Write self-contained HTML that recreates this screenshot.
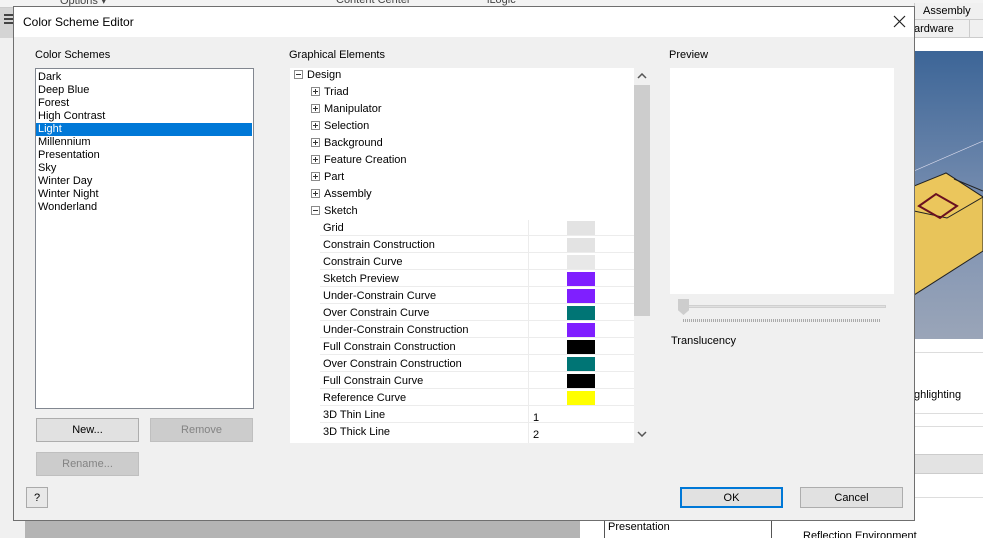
<!DOCTYPE html>
<html><head><meta charset="utf-8"><style>
*{margin:0;padding:0;box-sizing:border-box}
html,body{width:983px;height:538px;overflow:hidden}
body{position:relative;background:#f0f0f0;font-family:"Liberation Sans",sans-serif;font-size:11px;color:#000}
.a{position:absolute}
.btn{position:absolute;background:#e1e1e1;border:1px solid #adadad;display:flex;align-items:center;justify-content:center}
.dis{background:#cccccc;border-color:#bfbfbf;color:#838383}
.row{position:absolute;left:0;width:344px;height:17px;line-height:19px;white-space:nowrap}
.pm{display:inline-block;width:9px;height:9px;border:1px solid #8a8a8a;position:relative;vertical-align:-1px;margin-right:4px;background:#fff}
.pm:before{content:"";position:absolute;left:1px;top:3px;width:5px;height:1px;background:#333}
.pm.p:after{content:"";position:absolute;left:3px;top:1px;width:1px;height:5px;background:#333}
.sw{position:absolute;left:277px;top:2px;width:28px;height:14px}
.sep{position:absolute;left:30px;right:0;bottom:0;height:1px;background:#ececec}
</style></head><body>
<div class="a" style="left:0;top:0;width:983px;height:8px;background:#f3f3f3;border-bottom:1px solid #ccc"></div>
<div class="a" style="left:60px;top:-6px;color:#444">Options ▾</div>
<div class="a" style="left:336px;top:-6px;color:#444">Content Center</div>
<div class="a" style="left:487px;top:-6px;color:#444">iLogic</div>
<div class="a" style="left:0;top:8px;width:13px;height:30px;background:#d4d4d4"></div>
<div class="a" style="left:4px;top:14px;width:9px;height:2px;background:#444;box-shadow:0 4px 0 #444,0 8px 0 #444"></div>
<div class="a" style="left:0;top:38px;width:13px;height:500px;background:#f0f0f0"></div>
<div class="a" style="left:914px;top:3px;width:69px;height:17px;background:#f0f0f0;border-left:1px solid #ccc;border-bottom:1px solid #ccc;padding-left:8px;line-height:17px">Assembly</div>
<div class="a" style="left:914px;top:20px;width:69px;height:18px;background:#f0f0f0;border-bottom:1px solid #ccc;line-height:18px">ardware</div>
<div class="a" style="left:969px;top:20px;width:1px;height:18px;background:#ccc"></div>
<div class="a" style="left:914px;top:38px;width:69px;height:13px;background:#fff"></div>
<div class="a" style="left:914px;top:51px;width:69px;height:288px;background:linear-gradient(#3c6597,#7f93b3 60%,#9aa5b8)"></div>
<svg class="a" style="left:914px;top:51px" width="69" height="288"><polygon points="0,138 32,122 69,146 69,200 0,244" fill="#e8c45a" stroke="#222"/><polygon points="0,135 32,122 69,146 33,167 0,160" fill="#ebc65c" stroke="#222"/><polygon points="5,155 22,143 43,155 26,167" fill="none" stroke="#6a1020" stroke-width="2"/><line x1="0" y1="120" x2="69" y2="90" stroke="#dde" stroke-width=".6"/><line x1="40" y1="128" x2="69" y2="140" stroke="#222"/></svg>
<div class="a" style="left:914px;top:339px;width:69px;height:199px;background:#fff"></div>
<div class="a" style="left:914px;top:388px;line-height:14px">ghlighting</div>
<div class="a" style="left:914px;top:352px;width:69px;height:1px;background:#ddd"></div>
<div class="a" style="left:914px;top:413px;width:69px;height:1px;background:#ddd"></div>
<div class="a" style="left:914px;top:426px;width:69px;height:1px;background:#ddd"></div>
<div class="a" style="left:914px;top:454px;width:69px;height:20px;background:#e3e3e3;border-top:1px solid #ccc;border-bottom:1px solid #ccc"></div>
<div class="a" style="left:914px;top:497px;width:69px;height:1px;background:#ddd"></div>
<div class="a" style="left:25px;top:520px;width:555px;height:18px;background:#b4b4b4"></div>
<div class="a" style="left:580px;top:520px;width:403px;height:18px;background:#fff"></div>
<div class="a" style="left:604px;top:520px;width:168px;height:18px;border-left:1px solid #555;border-right:1px solid #555;padding-left:3px;line-height:14px">Presentation</div>
<div class="a" style="left:803px;top:530px">Reflection Environment</div>
<div class="a" style="left:13px;top:6px;width:902px;height:515px;background:#f0f0f0;border:1px solid #6f6f6f">
  <div class="a" style="left:0;top:0;width:900px;height:30px;background:#fff"></div>
  <div class="a" style="left:9px;top:8px;font-size:12px">Color Scheme Editor</div>
  <svg class="a" style="left:879px;top:8px" width="13" height="13"><path d="M1 1L12 12M12 1L1 12" stroke="#222" stroke-width="1.2"/></svg>
</div>
<div class="a" style="left:35px;top:49px">Color Schemes</div>
<div class="a" style="left:35px;top:68px;width:219px;height:341px;background:#fff;border:1px solid #828790;line-height:13px;padding-top:2px">
<div style="padding-left:2px">Dark</div><div style="padding-left:2px">Deep Blue</div><div style="padding-left:2px">Forest</div><div style="padding-left:2px">High Contrast</div>
<div style="padding-left:2px;background:#0078d7;color:#fff;margin-right:1px">Light</div>
<div style="padding-left:2px">Millennium</div><div style="padding-left:2px">Presentation</div><div style="padding-left:2px">Sky</div><div style="padding-left:2px">Winter Day</div><div style="padding-left:2px">Winter Night</div><div style="padding-left:2px">Wonderland</div>
</div>
<div class="btn" style="left:36px;top:418px;width:103px;height:24px">New...</div>
<div class="btn dis" style="left:150px;top:418px;width:103px;height:24px">Remove</div>
<div class="btn dis" style="left:36px;top:452px;width:103px;height:24px">Rename...</div>
<div class="btn" style="left:26px;top:487px;width:22px;height:21px;border-color:#aaa;background:#e8e8e8">?</div>
<div class="a" style="left:289px;top:49px">Graphical Elements</div>
<div class="a" style="left:290px;top:68px;width:360px;height:375px;background:#fff;overflow:hidden">
<div class="row" style="top:-2px;left:4px"><span class="pm"></span>Design</div>
<div class="row" style="top:15px;left:21px"><span class="pm p"></span>Triad</div>
<div class="row" style="top:32px;left:21px"><span class="pm p"></span>Manipulator</div>
<div class="row" style="top:49px;left:21px"><span class="pm p"></span>Selection</div>
<div class="row" style="top:66px;left:21px"><span class="pm p"></span>Background</div>
<div class="row" style="top:83px;left:21px"><span class="pm p"></span>Feature Creation</div>
<div class="row" style="top:100px;left:21px"><span class="pm p"></span>Part</div>
<div class="row" style="top:117px;left:21px"><span class="pm p"></span>Assembly</div>
<div class="row" style="top:134px;left:21px"><span class="pm"></span>Sketch</div>
<div class="a" style="left:238px;top:152px;width:1px;height:223px;background:#ececec"></div>
<div class="row" style="top:151px;padding-left:33px">Grid<div class="sep"></div><div class="sw" style="background:#e3e3e3"></div></div>
<div class="row" style="top:168px;padding-left:33px">Constrain Construction<div class="sep"></div><div class="sw" style="background:#e3e3e3"></div></div>
<div class="row" style="top:185px;padding-left:33px">Constrain Curve<div class="sep"></div><div class="sw" style="background:#e8e8e8"></div></div>
<div class="row" style="top:202px;padding-left:33px">Sketch Preview<div class="sep"></div><div class="sw" style="background:#7f1fff"></div></div>
<div class="row" style="top:219px;padding-left:33px">Under-Constrain Curve<div class="sep"></div><div class="sw" style="background:#7f1fff"></div></div>
<div class="row" style="top:236px;padding-left:33px">Over Constrain Curve<div class="sep"></div><div class="sw" style="background:#007575"></div></div>
<div class="row" style="top:253px;padding-left:33px">Under-Constrain Construction<div class="sep"></div><div class="sw" style="background:#7f1fff"></div></div>
<div class="row" style="top:270px;padding-left:33px">Full Constrain Construction<div class="sep"></div><div class="sw" style="background:#000"></div></div>
<div class="row" style="top:287px;padding-left:33px">Over Constrain Construction<div class="sep"></div><div class="sw" style="background:#007575"></div></div>
<div class="row" style="top:304px;padding-left:33px">Full Constrain Curve<div class="sep"></div><div class="sw" style="background:#000"></div></div>
<div class="row" style="top:321px;padding-left:33px">Reference Curve<div class="sep"></div><div class="sw" style="background:#ffff00"></div></div>
<div class="row" style="top:338px;padding-left:33px">3D Thin Line<div class="sep"></div><div class="a" style="left:243px;top:3px">1</div></div>
<div class="row" style="top:355px;padding-left:33px">3D Thick Line<div class="a" style="left:243px;top:3px">2</div></div>
<div class="a" style="left:344px;top:0;width:16px;height:375px;background:#f0f0f0"></div>
<div class="a" style="left:344px;top:17px;width:16px;height:231px;background:#cdcdcd"></div>
<svg class="a" style="left:347px;top:5px" width="10" height="6"><path d="M1 5L5 1L9 5" fill="none" stroke="#555" stroke-width="1.5"/></svg>
<svg class="a" style="left:347px;top:363px" width="10" height="6"><path d="M1 1L5 5L9 1" fill="none" stroke="#555" stroke-width="1.5"/></svg>
</div>
<div class="a" style="left:669px;top:49px">Preview</div>
<div class="a" style="left:670px;top:68px;width:224px;height:226px;background:#fff"></div>
<div class="a" style="left:679px;top:305px;width:207px;height:3px;background:#e0e0e0;border:1px solid #d0d0d0"></div>
<div class="a" style="left:678px;top:299px;width:11px;height:16px;background:#cdcdcd;clip-path:polygon(0 0,100% 0,100% 70%,50% 100%,0 70%)"></div>
<div class="a" style="left:683px;top:319px;width:198px;height:3px;background:repeating-linear-gradient(90deg,#aaa 0 1px,transparent 1px 2px)"></div>
<div class="a" style="left:671px;top:335px">Translucency</div>
<div class="btn" style="left:680px;top:487px;width:103px;height:21px;border:2px solid #0078d7">OK</div>
<div class="btn" style="left:800px;top:487px;width:103px;height:21px">Cancel</div>
</body></html>
